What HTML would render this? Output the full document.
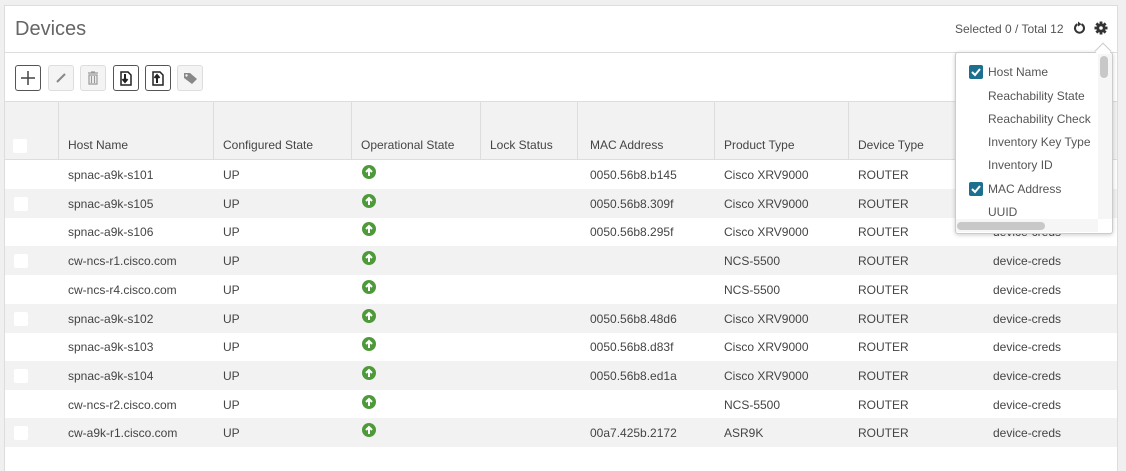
<!DOCTYPE html>
<html><head><meta charset="utf-8"><style>
*{box-sizing:border-box;margin:0;padding:0}
html{width:1126px;height:471px;overflow:hidden}
body{width:1126px;height:471px;background:#f0f0f0;font-family:"Liberation Sans",Arial,sans-serif;color:#333;position:relative;overflow:hidden}
.abs{position:absolute}
.panel{left:4px;top:5px;width:1114px;height:466px;background:#fff;border:1px solid #ddd;border-bottom:none}
.t{position:absolute;font-size:12px;color:#444;white-space:nowrap}
.btn{position:absolute;top:65px;width:26px;height:26px;border:1px solid #555;border-radius:3px;background:#fff}
.btn.dis{border-color:#ddd;background:#f4f4f4}
.row{position:absolute;left:5px;width:1112px;height:29px}
.g{background:#f2f2f2}
.cb{position:absolute;left:13px;width:14px;height:14px;background:#fff;border-radius:2px}
.hsep{position:absolute;top:102px;height:58px;width:1px;background:#ddd}
.up{position:absolute;width:14px;height:14px}
</style></head><body>
<div class="abs panel"></div>
<div class="abs" style="left:5px;top:52px;width:1112px;height:1px;background:#ddd"></div>
<div class="t" style="left:15px;top:18px;font-size:20px;color:#666">Devices</div>
<div class="t" style="left:955px;top:22px;font-size:12px;color:#555">Selected 0 / Total 12</div>
<svg class="abs" style="left:1073px;top:21px" width="13" height="14" viewBox="0 0 13 14"><path d="M8.5 3.2A4.5 4.5 0 1 1 4.5 3.2" fill="none" stroke="#333" stroke-width="2"/><path d="M5 0.5l3.5 2.8L5 5.5z" fill="#333"/></svg>
<svg class="abs" style="left:1094px;top:21px" width="14" height="14" viewBox="0 0 14 14"><g fill="#333"><circle cx="7" cy="7" r="4.6"/><rect x="5.6" y="0.5" width="2.8" height="13"/><rect x="0.5" y="5.6" width="13" height="2.8"/><rect x="5.6" y="0.5" width="2.8" height="13" transform="rotate(45 7 7)"/><rect x="5.6" y="0.5" width="2.8" height="13" transform="rotate(-45 7 7)"/></g><circle cx="7" cy="7" r="1.8" fill="#fff"/></svg>

<div class="btn" style="left:15px"><svg width="24" height="24"><path d="M12 5v14M5 12h14" stroke="#444" stroke-width="1.5"/></svg></div>
<div class="btn dis" style="left:48px"><svg width="24" height="24"><path d="M8 16l8-8" stroke="#888" stroke-width="2"/></svg></div>
<div class="btn dis" style="left:80px"><svg width="24" height="24"><path d="M7 7h10M10 6h4M8 9h8v9H8z M10.5 10v7M13.5 10v7" stroke="#999" stroke-width="1.2" fill="none"/></svg></div>
<div class="btn" style="left:113px"><svg width="24" height="24"><path d="M7 6h7l3 3v10H7z" stroke="#222" stroke-width="1.5" fill="none"/><path d="M11 8v7M8.5 13l2.5 3 2.5-3" stroke="#222" stroke-width="2" fill="none"/></svg></div>
<div class="btn" style="left:145px"><svg width="24" height="24"><path d="M7 6h7l3 3v10H7z" stroke="#222" stroke-width="1.5" fill="none"/><path d="M11 17v-7M8.5 12l2.5-3 2.5 3" stroke="#222" stroke-width="2" fill="none"/></svg></div>
<div class="btn dis" style="left:177px"><svg width="24" height="24"><path d="M6 7h6l7 6-5 5-8-6z" fill="#888"/><circle cx="8.5" cy="9.5" r="1.2" fill="#f4f4f4"/></svg></div>

<div class="abs" style="left:5px;top:101px;width:1112px;height:59px;background:#f2f2f2;border-top:1px solid #ddd;border-bottom:1px solid #ddd"></div>
<div class="cb" style="top:139px"></div>
<div class="hsep" style="left:58px"></div><div class="hsep" style="left:213px"></div><div class="hsep" style="left:351px"></div><div class="hsep" style="left:480px"></div><div class="hsep" style="left:577px"></div><div class="hsep" style="left:714px"></div><div class="hsep" style="left:848px"></div>
<div class="t" style="left:68px;top:138px">Host Name</div>
<div class="t" style="left:223px;top:138px">Configured State</div>
<div class="t" style="left:361px;top:138px">Operational State</div>
<div class="t" style="left:490px;top:138px">Lock Status</div>
<div class="t" style="left:590px;top:138px">MAC Address</div>
<div class="t" style="left:724px;top:138px">Product Type</div>
<div class="t" style="left:858px;top:138px">Device Type</div>

<div id="rows"></div>
<script>
var d=[["spnac-a9k-s101","0050.56b8.b145","Cisco XRV9000"],["spnac-a9k-s105","0050.56b8.309f","Cisco XRV9000"],["spnac-a9k-s106","0050.56b8.295f","Cisco XRV9000"],["cw-ncs-r1.cisco.com","","NCS-5500"],["cw-ncs-r4.cisco.com","","NCS-5500"],["spnac-a9k-s102","0050.56b8.48d6","Cisco XRV9000"],["spnac-a9k-s103","0050.56b8.d83f","Cisco XRV9000"],["spnac-a9k-s104","0050.56b8.ed1a","Cisco XRV9000"],["cw-ncs-r2.cisco.com","","NCS-5500"],["cw-a9k-r1.cisco.com","00a7.425b.2172","ASR9K"]];
var h="";
d.forEach(function(r,i){var y=160+i*28.7;var g=i%2==1;
h+='<div class="row'+(g?' g':'')+'" style="top:'+y+'px">'+(g?'<div class="cb" style="top:8px;left:9px"></div>':'')+'</div>';
var ty=y+8;
h+='<div class="t" style="left:68px;top:'+ty+'px">'+r[0]+'</div><div class="t" style="left:223px;top:'+ty+'px">UP</div>';
h+='<svg class="up" style="left:362px;top:'+(y+5)+'px" viewBox="0 0 14 14"><circle cx="7" cy="7" r="7" fill="#4e9a3a"/><path d="M7 11V4M4 7l3-3 3 3" stroke="#fff" stroke-width="2" fill="none"/></svg>';
h+='<div class="t" style="left:590px;top:'+ty+'px">'+r[1]+'</div><div class="t" style="left:724px;top:'+ty+'px">'+r[2]+'</div><div class="t" style="left:858px;top:'+ty+'px">ROUTER</div><div class="t" style="left:993px;top:'+ty+'px">device-creds</div>';});
document.getElementById("rows").innerHTML=h;
</script>

<div class="abs" style="left:955px;top:52px;width:158px;height:182px;background:#fff;border:1px solid #ccc;border-radius:3px;box-shadow:0 1px 4px rgba(0,0,0,.2)"></div>
<div class="abs" style="left:1097px;top:45px;width:12px;height:12px;background:#fff;border-left:1px solid #ccc;border-top:1px solid #ccc;transform:rotate(45deg)"></div>
<div class="abs" style="left:1098px;top:54px;width:14px;height:165px;background:#f6f6f6"></div>
<div class="abs" style="left:1100px;top:56px;width:8px;height:22px;background:#c8c8c8;border-radius:4px"></div>
<div class="abs" style="left:956px;top:219px;width:142px;height:13px;background:#f6f6f6"></div>
<div class="abs" style="left:957px;top:222px;width:88px;height:8px;background:#c8c8c8;border-radius:4px"></div>
<div class="abs" style="left:969px;top:65px;width:14px;height:14px;background:#1d6f8f;border-radius:2px"><svg width="14" height="14"><path d="M3 7l3 3 5-6" stroke="#fff" stroke-width="2" fill="none"/></svg></div>
<div class="abs" style="left:969px;top:182px;width:14px;height:14px;background:#1d6f8f;border-radius:2px"><svg width="14" height="14"><path d="M3 7l3 3 5-6" stroke="#fff" stroke-width="2" fill="none"/></svg></div>
<div class="t" style="left:988px;top:65px;color:#555">Host Name</div>
<div class="t" style="left:988px;top:89px;color:#555">Reachability State</div>
<div class="t" style="left:988px;top:112px;color:#555">Reachability Check</div>
<div class="t" style="left:988px;top:135px;color:#555">Inventory Key Type</div>
<div class="t" style="left:988px;top:158px;color:#555">Inventory ID</div>
<div class="t" style="left:988px;top:182px;color:#555">MAC Address</div>
<div class="t" style="left:988px;top:205px;color:#555">UUID</div>
</body></html>
